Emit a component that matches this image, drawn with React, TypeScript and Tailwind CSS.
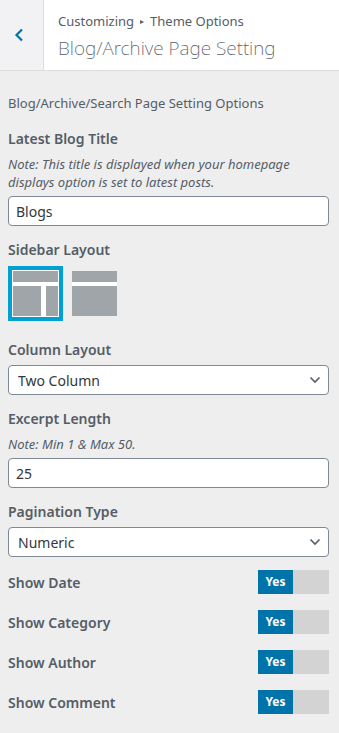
import React from 'react';

const font = { fontFamily: '"Noto Sans", "Open Sans", Arial, sans-serif' };

function Label({ children, className = '' }: { children: React.ReactNode; className?: string }) {
  return (
    <div className={`text-[14px] leading-[20px] font-semibold text-[#555d66] ${className}`}>
      {children}
    </div>
  );
}

function Note({ children, className = '' }: { children: React.ReactNode; className?: string }) {
  return <div className={`text-[13px] leading-[18px] italic text-[#555d66] ${className}`}>{children}</div>;
}

function TextInput({ value, className = '' }: { value: string; className?: string }) {
  return (
    <div
      className={`h-[30px] w-full rounded-[4px] border border-[#7e8993] bg-white px-[7px] flex items-center text-[14px] text-[#32373c] ${className}`}
    >
      {value}
    </div>
  );
}

function Select({ value, className = '' }: { value: string; className?: string }) {
  return (
    <div
      className={`h-[30px] w-full rounded-[4px] border border-[#7e8993] bg-white pl-[9px] pr-[7px] flex items-center justify-between text-[14px] text-[#32373c] ${className}`}
    >
      <span>{value}</span>
      <svg width="12" height="8" viewBox="0 0 12 8" fill="none">
        <path d="M1.5 1.5 L6 6 L10.5 1.5" stroke="#555d66" strokeWidth="1.6" />
      </svg>
    </div>
  );
}

function Toggle({ label }: { label: string }) {
  return (
    <div className="flex items-center justify-between h-[24px]">
      <span className="text-[14px] font-semibold text-[#555d66]">{label}</span>
      <div className="flex h-[24px] w-[71px]">
        <div className="w-[35px] bg-[#0073aa] text-white text-[12px] font-bold flex items-center justify-center">
          Yes
        </div>
        <div className="flex-1 bg-[#d3d3d3]" />
      </div>
    </div>
  );
}

export default function App() {
  return (
    <div className="w-[339px] min-h-[733px] bg-[#eeeeee]" style={font}>
      <div className="flex h-[71px] bg-white border-b border-[#dddddd]">
        <div className="w-[44px] bg-[#f2f2f4] border-r border-[#dddddd] flex items-center justify-center pr-[5px]">
          <svg width="10" height="14" viewBox="0 0 10 14" fill="none">
            <path d="M8 1.5 L2.5 7 L8 12.5" stroke="#0073aa" strokeWidth="2.2" />
          </svg>
        </div>
        <div className="pl-[14px] pt-[11px]">
          <div className="text-[13px] leading-[20px] text-[#555d66] flex items-center">
            Customizing
            <span className="mx-[6px] text-[8px]">▸</span>
            Theme Options
          </div>
          <div className="text-[19px] leading-[28px] font-extralight text-[#555d66] mt-[3px]">
            Blog/Archive Page Setting
          </div>
        </div>
      </div>

      <div className="pl-[8px] pr-[10px]">
        <div className="mt-[23px] text-[13px] leading-[18px] text-[#555d66]">
          Blog/Archive/Search Page Setting Options
        </div>

        <Label className="mt-[17px]">Latest Blog Title</Label>
        <Note className="mt-[6px]">
          Note: This title is displayed when your homepage displays option is set to latest posts.
        </Note>
        <TextInput value="Blogs" className="mt-[5px]" />

        <Label className="mt-[14px]">Sidebar Layout</Label>
        <div className="mt-[6px] flex items-center gap-[9px]">
          <div className="w-[55px] h-[55px] border-[4px] border-[#00a0d2] bg-white p-[1px]">
            <div className="w-full h-full bg-[#a0a5aa] flex flex-col">
              <div className="h-[11px]" />
              <div className="h-[4px] bg-white" />
              <div className="flex-1 flex">
                <div className="w-[28px]" />
                <div className="w-[5px] bg-white" />
                <div className="flex-1" />
              </div>
            </div>
          </div>
          <div className="w-[45px] h-[45px] bg-[#a0a5aa] flex flex-col">
            <div className="h-[11px]" />
            <div className="h-[4px] bg-white" />
            <div className="flex-1" />
          </div>
        </div>

        <Label className="mt-[19px]">Column Layout</Label>
        <Select value="Two Column" className="mt-[5px]" />

        <Label className="mt-[14px]">Excerpt Length</Label>
        <Note className="mt-[6px]">Note: Min 1 &amp; Max 50.</Note>
        <TextInput value="25" className="mt-[5px]" />

        <Label className="mt-[14px]">Pagination Type</Label>
        <Select value="Numeric" className="mt-[5px]" />

        <div className="mt-[13px] flex flex-col gap-[16px]">
          <Toggle label="Show Date" />
          <Toggle label="Show Category" />
          <Toggle label="Show Author" />
          <Toggle label="Show Comment" />
        </div>
      </div>
    </div>
  );
}
